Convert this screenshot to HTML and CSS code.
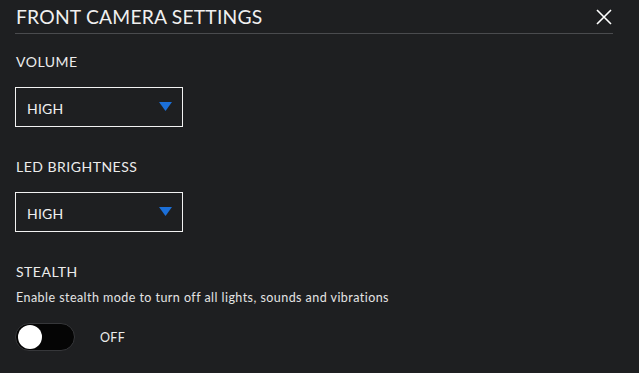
FILE: index.html
```html
<!DOCTYPE html>
<html>
<head>
<meta charset="utf-8">
<link rel="stylesheet" href="styles.css">
</head>
<body>
<div class="panel">
  <div class="header">
    <h1 class="title">FRONT CAMERA SETTINGS</h1>
    <button class="close" aria-label="Close">
      <svg width="16" height="16" viewBox="0 0 16 16"><path d="M1 1 L15 15 M15 1 L1 15" stroke="#ffffff" stroke-width="1.6" fill="none"/></svg>
    </button>
  </div>
  <div class="section">
    <div class="label">VOLUME</div>
    <div class="select">
      <span class="value">HIGH</span>
      <svg class="caret" width="13" height="9" viewBox="0 0 13 9"><path d="M0 0 H13 L6.5 9 Z" fill="#1b6fd8"/></svg>
    </div>
  </div>
  <div class="section">
    <div class="label">LED BRIGHTNESS</div>
    <div class="select">
      <span class="value">HIGH</span>
      <svg class="caret" width="13" height="9" viewBox="0 0 13 9"><path d="M0 0 H13 L6.5 9 Z" fill="#1b6fd8"/></svg>
    </div>
  </div>
  <div class="section stealth">
    <div class="label">STEALTH</div>
    <div class="desc">Enable stealth mode to turn off all lights, sounds and vibrations</div>
    <div class="toggle-row">
      <div class="toggle"><div class="knob"></div></div>
      <span class="state">OFF</span>
    </div>
  </div>
</div>
</body>
</html>
```
FILE: styles.css
```css
html, body {
  margin: 0;
  padding: 0;
  background: #1e1f21;
}
body {
  width: 639px;
  height: 373px;
  overflow: hidden;
  font-family: Lato, "Open Sans", sans-serif;
  color: #e8e8e8;
}
.panel {
  padding: 0 26px 0 15px;
}
.header {
  display: flex;
  justify-content: space-between;
  align-items: center;
  height: 33px;
  border-bottom: 1px solid #4a4b4e;
}
.title {
  margin: 0 0 0 1px;
  font-size: 19.3px;
  font-weight: 400;
  letter-spacing: 0.2px;
  color: #f0f0f0;
  line-height: 33px;
}
.close {
  background: none;
  border: 0;
  padding: 0;
  width: 16px;
  height: 16px;
  margin-right: 1px;
  display: flex;
  cursor: pointer;
}
.section {
  padding-top: 19px;
}
.section + .section {
  padding-top: 31px;
}
.label {
  font-size: 14px;
  line-height: 18px;
  margin-left: 1px;
  color: #ececec;
  letter-spacing: 0.5px;
}
.select {
  margin-top: 16px;
  height: 38px;
  width: 145px;
  border: 1px solid #f2f2f2;
  display: flex;
  align-items: center;
  justify-content: space-between;
  padding: 0 10px 0 11px;
}
.value {
  font-size: 14px;
  color: #f0f0f0;
  padding-top: 3px;
  letter-spacing: 0.2px;
}
.caret {
  margin-top: -2px;
}
.desc {
  font-size: 12.5px;
  line-height: 16px;
  letter-spacing: 0.45px;
  margin-top: 9px;
  margin-left: 1px;
  color: #e4e4e4;
}
.toggle-row {
  display: flex;
  align-items: center;
  margin-top: 17px;
}
.toggle {
  box-sizing: border-box;
  width: 60px;
  height: 28px;
  border: 1px solid #36373a;
  border-radius: 14px;
  background: #050505;
  display: flex;
  align-items: center;
  padding-left: 2px;
}
.knob {
  width: 24px;
  height: 24px;
  border-radius: 50%;
  background: #ffffff;
}
.state {
  margin-left: 25px;
  font-size: 12.5px;
  color: #ececec;
  letter-spacing: 0.3px;
}
```
